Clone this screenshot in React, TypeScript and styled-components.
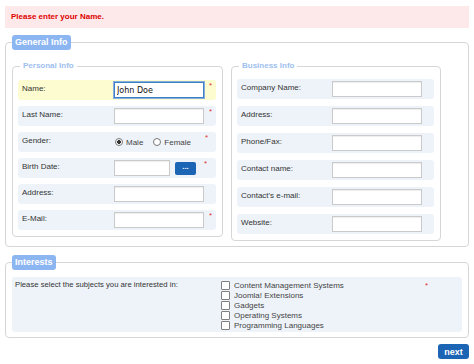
import * as React from 'react';
import styled, { createGlobalStyle } from 'styled-components';

const GlobalStyle = createGlobalStyle`
    html, body {
        margin: 0;
        padding: 0;
        background: #ffffff;
    }
    body {
        font-family: "Liberation Sans", Arial, sans-serif;
        font-size: 8px;
        color: #333333;
    }
`;

const Page = styled.div`
    width: 474px;
    box-sizing: border-box;
    padding: 6px 5px 0;
`;

const ErrorBar = styled.div`
    height: 22px;
    line-height: 22px;
    padding-left: 6px;
    background: #fde9e9;
    color: #dd0000;
    font-weight: bold;
    font-size: 8px;
`;

const Group = styled.fieldset<{ $mt?: number; $pt: number; $pb: number; $pr?: number }>`
    margin: ${p => p.$mt ?? 0}px 0 0;
    padding: ${p => p.$pt}px ${p => p.$pr ?? 6}px ${p => p.$pb}px 6px;
    border: 1px solid #d6d6d6;
    border-radius: 4px;
    min-width: 0;
`;

const Badge = styled.legend`
    margin: 0;
    padding: 0 3px;
    height: 15px;
    line-height: 15px;
    background: #8cb6f2;
    border-radius: 3px;
    color: #ffffff;
    font-weight: bold;
    font-size: 9px;
`;

const Columns = styled.div`
    display: flex;
    align-items: flex-start;
    gap: 8px;
`;

const SubGroup = styled.fieldset<{ $w: number; $pt: number; $pb: number }>`
    width: ${p => p.$w}px;
    box-sizing: border-box;
    margin: 0;
    padding: ${p => p.$pt}px 6px ${p => p.$pb}px 5px;
    border: 1px solid #d6d6d6;
    border-radius: 4px;
    min-width: 0;
`;

const SubLegend = styled.legend`
    margin-left: 2px;
    padding: 0 3px;
    line-height: 10px;
    color: #9ec0ee;
    font-weight: bold;
    font-size: 8px;
`;

const Rows = styled.div<{ $gap: number }>`
    display: flex;
    flex-direction: column;
    gap: ${p => p.$gap}px;
`;

const Row = styled.div<{ $hl?: boolean; $lw: number }>`
    display: flex;
    align-items: flex-start;
    height: 20px;
    background: ${p => (p.$hl ? '#fdfbd0' : '#eef3fa')};
    border-radius: 3px;
    & > label {
        width: ${p => p.$lw}px;
    }
`;

const Label = styled.label`
    flex: none;
    box-sizing: border-box;
    padding: 3px 0 0 4px;
    line-height: 12px;
    color: #333333;
`;

const Field = styled.div`
    width: 90px;
    height: 20px;
    display: flex;
    align-items: center;
    gap: 5px;
`;

const TextInput = styled.input<{ $w?: number; $focus?: boolean }>`
    width: ${p => p.$w ?? 90}px;
    height: 16px;
    box-sizing: border-box;
    margin: 0;
    padding: 0 2px;
    border: 1px solid ${p => (p.$focus ? '#3f7fc6' : '#cacaca')};
    box-shadow: ${p => (p.$focus ? '0 0 0 1px #86afe0' : 'inset 0 1px 1px #eeeeee')};
    background: #ffffff;
    font-family: "DejaVu Sans", sans-serif;
    font-size: 8px;
    color: #111111;
    outline: none;
`;

const Req = styled.span<{ $gap: number }>`
    margin-left: ${p => p.$gap}px;
    padding-top: 2px;
    line-height: 8px;
    color: #e03030;
    font-size: 8px;
`;

const Choice = styled.span`
    display: inline-flex;
    align-items: center;
    gap: 3px;
    margin-right: 5px;
    color: #444444;
`;

const Radio = styled.span<{ $on?: boolean }>`
    width: 6px;
    height: 6px;
    border: 1px solid #777777;
    border-radius: 50%;
    background: ${p => (p.$on ? 'radial-gradient(circle, #333 0 1.6px, #fff 2.2px)' : '#ffffff')};
`;

const DotsButton = styled.button`
    width: 21px;
    height: 13px;
    margin: 0;
    padding: 0 0 3px;
    border: none;
    border-radius: 2px;
    background: #1c64b4;
    color: #ffffff;
    font-family: "Liberation Sans", Arial, sans-serif;
    font-weight: bold;
    font-size: 8px;
    line-height: 8px;
`;

const InterestRow = styled.div`
    display: flex;
    align-items: flex-start;
    padding: 3px 0 2px 3px;
    background: #eef3fa;
    border-radius: 3px;
`;

const InterestLabel = styled.div`
    width: 206px;
    line-height: 10px;
    font-size: 7.7px;
`;

const CheckList = styled.div`
    width: 204px;
    display: flex;
    flex-direction: column;
`;

const CheckItem = styled.label`
    display: flex;
    align-items: center;
    gap: 4px;
    height: 10px;
    color: #444444;
`;

const Box = styled.span`
    width: 7px;
    height: 7px;
    border: 1px solid #808080;
    border-radius: 1px;
    background: #ffffff;
`;

const Footer = styled.div`
    display: flex;
    justify-content: flex-end;
    padding-top: 6px;
`;

const NextButton = styled.button`
    width: 31px;
    height: 15px;
    margin: 0;
    padding: 0;
    border: none;
    border-radius: 3px;
    background: #1c64b4;
    color: #ffffff;
    font-family: "Liberation Sans", Arial, sans-serif;
    font-weight: bold;
    font-size: 9px;
`;

const business = ['Company Name:', 'Address:', 'Phone/Fax:', 'Contact name:', "Contact's e-mail:", 'Website:'];
const interests = ['Content Management Systems', 'Joomla! Extensions', 'Gadgets', 'Operating Systems', 'Programming Languages'];

export default function App() {
    return (
        <Page>
            <GlobalStyle />
            <ErrorBar>Please enter your Name.</ErrorBar>

            <Group $mt={7} $pt={11} $pb={5} $pr={27}>
                <Badge>General Info</Badge>
                <Columns>
                    <SubGroup $w={212} $pt={9} $pb={6}>
                        <SubLegend>Personal Info</SubLegend>
                        <Rows $gap={6}>
                            <Row $hl $lw={96}>
                                <Label>Name:</Label>
                                <Field><TextInput $focus defaultValue="John Doe" /></Field>
                                <Req $gap={5}>*</Req>
                            </Row>
                            <Row $lw={96}>
                                <Label>Last Name:</Label>
                                <Field><TextInput /></Field>
                                <Req $gap={5}>*</Req>
                            </Row>
                            <Row $lw={97}>
                                <Label>Gender:</Label>
                                <Field>
                                    <Choice><Radio $on />Male</Choice>
                                    <Choice><Radio />Female</Choice>
                                </Field>
                                <Req $gap={0}>*</Req>
                            </Row>
                            <Row $lw={96}>
                                <Label>Birth Date:</Label>
                                <Field>
                                    <TextInput $w={56} />
                                    <DotsButton>...</DotsButton>
                                </Field>
                                <Req $gap={0}>*</Req>
                            </Row>
                            <Row $lw={96}>
                                <Label>Address:</Label>
                                <Field><TextInput /></Field>
                            </Row>
                            <Row $lw={96}>
                                <Label>E-Mail:</Label>
                                <Field><TextInput /></Field>
                                <Req $gap={5}>*</Req>
                            </Row>
                        </Rows>
                    </SubGroup>

                    <SubGroup $w={211} $pt={8} $pb={6}>
                        <SubLegend>Business Info</SubLegend>
                        <Rows $gap={7}>
                            {business.map(b => (
                                <Row key={b} $lw={95}>
                                    <Label>{b}</Label>
                                    <Field><TextInput /></Field>
                                </Row>
                            ))}
                        </Rows>
                    </SubGroup>
                </Columns>
            </Group>

            <Group $mt={8} $pt={7} $pb={5}>
                <Badge>Interests</Badge>
                <InterestRow>
                    <InterestLabel>Please select the subjects you are interested in:</InterestLabel>
                    <CheckList>
                        {interests.map(i => (
                            <CheckItem key={i}><Box />{i}</CheckItem>
                        ))}
                    </CheckList>
                    <Req $gap={0}>*</Req>
                </InterestRow>
            </Group>

            <Footer>
                <NextButton>next</NextButton>
            </Footer>
        </Page>
    );
}
